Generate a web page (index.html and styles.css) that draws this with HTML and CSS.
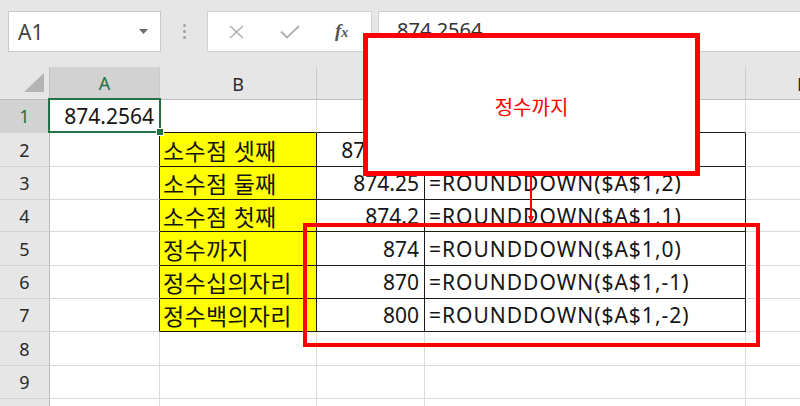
FILE: index.html
```html
<!DOCTYPE html>
<html lang="ko">
<head>
<meta charset="utf-8">
<title>ROUNDDOWN</title>
<link rel="stylesheet" href="styles.css">
</head>
<body>
<div class="app">
  <div class="toolbar">
    <div class="namebox">
      <span class="nb-text">A1</span>
      <svg class="nb-caret" width="9" height="6" viewBox="0 0 9 6"><path d="M0 0 H9 L4.5 5 Z" fill="#6b6b6b"/></svg>
    </div>
    <div class="dots"><i></i><i></i><i></i></div>
    <div class="fxbox">
      <svg class="ic-x" width="18" height="14" viewBox="0 0 18 14"><path d="M2 1 L15 13 M15 1 L2 13" stroke="#b0b0b0" stroke-width="1.6" fill="none"/></svg>
      <svg class="ic-check" width="20" height="14" viewBox="0 0 20 14"><path d="M1 6.5 L7 12.5 L19 1" stroke="#b0b0b0" stroke-width="1.8" fill="none"/></svg>
      <span class="ic-fx">f<span class="fx-x">x</span></span>
    </div>
    <div class="formula">874.2564</div>
  </div>

  <div class="sheet">
    <div class="hd corner"></div>
    <div class="hd col sel-col">A</div>
    <div class="hd col">B</div>
    <div class="hd col">C</div>
    <div class="hd col">D</div>
    <div class="hd col">E</div>

    <div class="hd row sel-row">1</div>
    <div class="c num a1">874.2564<span class="selbox"><span class="handle"></span></span></div>
    <div class="c bb"></div>
    <div class="c bb"></div>
    <div class="c bb"></div>
    <div class="c"></div>

    <div class="hd row">2</div>
    <div class="c br"></div>
    <div class="c t y">소수점 셋째</div>
    <div class="c t num">874.256</div>
    <div class="c t f">=ROUNDDOWN($A$1,3)</div>
    <div class="c"></div>

    <div class="hd row">3</div>
    <div class="c br"></div>
    <div class="c t y">소수점 둘째</div>
    <div class="c t num">874.25</div>
    <div class="c t f">=ROUNDDOWN($A$1,2)</div>
    <div class="c"></div>

    <div class="hd row">4</div>
    <div class="c br"></div>
    <div class="c t y">소수점 첫째</div>
    <div class="c t num">874.2</div>
    <div class="c t f">=ROUNDDOWN($A$1,1)</div>
    <div class="c"></div>

    <div class="hd row">5</div>
    <div class="c br"></div>
    <div class="c t y">정수까지</div>
    <div class="c t num">874</div>
    <div class="c t f">=ROUNDDOWN($A$1,0)</div>
    <div class="c"></div>

    <div class="hd row">6</div>
    <div class="c br"></div>
    <div class="c t y">정수십의자리</div>
    <div class="c t num">870</div>
    <div class="c t f">=ROUNDDOWN($A$1,-1)</div>
    <div class="c"></div>

    <div class="hd row">7</div>
    <div class="c br"></div>
    <div class="c t y">정수백의자리</div>
    <div class="c t num">800</div>
    <div class="c t f">=ROUNDDOWN($A$1,-2)</div>
    <div class="c"></div>

    <div class="hd row">8</div>
    <div class="c"></div><div class="c"></div><div class="c"></div><div class="c"></div><div class="c"></div>

    <div class="hd row">9</div>
    <div class="c"></div><div class="c"></div><div class="c"></div><div class="c"></div><div class="c"></div>

    <div class="hd row"></div>
    <div class="c"></div><div class="c"></div><div class="c"></div><div class="c"></div><div class="c"></div>
  </div>

  <div class="callout">정수까지</div>
  <svg class="arrow" width="12" height="50" viewBox="0 0 12 50"><path d="M6 0 V42" stroke="#ff0000" stroke-width="2"/><path d="M3 40 L9 40 L6 47 Z" fill="#ff0000"/></svg>
  <div class="highlight"></div>
</div>
</body>
</html>
```
FILE: styles.css
```css
html, body {
  margin: 0;
  padding: 0;
  width: 800px;
  height: 406px;
  overflow: hidden;
  background: #ffffff;
}

.app {
  position: relative;
  width: 800px;
  height: 406px;
  overflow: hidden;
  font-family: "Noto Sans", "Noto Sans CJK KR", sans-serif;
  color: #222;
}

/* toolbar / formula bar */
.toolbar {
  height: 67px;
  box-sizing: border-box;
  padding-top: 11px;
  background: #e6e6e6;
  display: flex;
  align-items: flex-start;
}

.namebox {
  margin-left: 8px;
  width: 153px;
  height: 41px;
  box-sizing: border-box;
  background: #fff;
  border: 1px solid #c9c9c9;
  display: flex;
  align-items: center;
  justify-content: space-between;
  padding: 0 12px 0 9px;
}

.nb-text {
  font-size: 21px;
  color: #444;
  line-height: 1;
  margin-top: 1px;
}

.nb-caret {
  display: block;
  margin-top: 1px;
}

.dots {
  width: 46px;
  height: 41px;
  display: flex;
  flex-direction: column;
  align-items: center;
  justify-content: center;
  gap: 3px;
  padding-left: 1px;
  box-sizing: border-box;
}

.dots i {
  display: block;
  width: 3px;
  height: 3px;
  border-radius: 50%;
  background: #a0a0a0;
}

.fxbox {
  width: 165px;
  height: 41px;
  box-sizing: border-box;
  background: #fff;
  border: 1px solid #d2d2d2;
  display: flex;
  align-items: center;
}

.ic-x {
  display: block;
  margin-left: 20px;
}

.ic-check {
  display: block;
  margin-left: 34px;
  margin-top: 1px;
}

.ic-fx {
  margin-left: 35px;
  font-family: "Liberation Serif", serif;
  font-style: italic;
  font-weight: bold;
  font-size: 19px;
  color: #555;
  line-height: 1;
  margin-top: -3px;
}

.fx-x {
  font-size: 14px;
}

.formula {
  flex: 1;
  margin-left: 6px;
  margin-right: -10px;
  height: 41px;
  box-sizing: border-box;
  background: #fff;
  border: 1px solid #cdcdcd;
  padding: 0 0 4px 18px;
  display: flex;
  align-items: center;
  font-size: 20px;
  color: #333;
}

/* sheet grid */
.sheet {
  display: grid;
  grid-template-columns: 50px 110px 157px 108px 321px 113px;
  grid-template-rows: 33px 33px 34px 33px 32px 34px 33px 33px 34px 33px 33px;
  width: 859px;
}

.hd {
  box-sizing: border-box;
  background: #e6e6e6;
  display: flex;
  align-items: center;
  justify-content: center;
  color: #2a2a2a;
  font-size: 18px;
}

.hd.corner {
  position: relative;
  border-right: 1px solid #c4c4c4;
  border-bottom: 1px solid #bdbdbd;
}

.hd.corner::after {
  content: "";
  position: absolute;
  right: 5px;
  bottom: 7px;
  width: 20px;
  height: 19px;
  background: #b4b4b4;
  clip-path: polygon(100% 0, 100% 100%, 0 100%);
}

.hd.col {
  border-right: 1px solid #cbcbcb;
  border-bottom: 1px solid #bdbdbd;
  padding-top: 1px;
}

.hd.row {
  border-right: 1px solid #bdbdbd;
  border-bottom: 1px solid #d2d2d2;
}

.hd.sel-col {
  background: #d2d2d2;
  color: #217346;
  border-bottom: 2px solid #217346;
}

.hd.sel-row {
  background: #d2d2d2;
  color: #217346;
}

.c {
  box-sizing: border-box;
  border-right: 1px solid #dadada;
  border-bottom: 1px solid #dadada;
  display: flex;
  align-items: center;
  padding: 0 4px;
  font-size: 21px;
  white-space: nowrap;
  color: #151515;
}

.c.t {
  border-right: 1px solid #1a1a1a;
  border-bottom: 1px solid #1a1a1a;
}

.c.br {
  border-right: 1px solid #1a1a1a;
}

.c.bb {
  border-bottom: 1px solid #1a1a1a;
}

.c.y {
  background: #ffff00;
  padding-left: 3px;
  font-size: 23px;
  letter-spacing: 0.3px;
}

.c.num {
  justify-content: flex-end;
  padding-right: 5px;
}

.c.f {
  padding-left: 4px;
  letter-spacing: 1px;
}

.c.a1 {
  position: relative;
}

.selbox {
  position: absolute;
  left: -2px;
  top: -2px;
  right: -2px;
  bottom: -1px;
  border: 2px solid #217346;
}

.handle {
  position: absolute;
  right: -5px;
  bottom: -5px;
  width: 6px;
  height: 6px;
  background: #217346;
  border: 1px solid #fff;
}

/* overlays */
.callout {
  position: absolute;
  left: 363px;
  top: 33px;
  width: 337px;
  height: 143px;
  box-sizing: border-box;
  border: 5px solid #ff0000;
  background: #fff;
  display: flex;
  align-items: center;
  justify-content: center;
  color: #ff0000;
  font-size: 20px;
  padding-top: 3px;
}

.arrow {
  position: absolute;
  left: 525px;
  top: 176px;
}

.highlight {
  position: absolute;
  left: 303px;
  top: 223px;
  width: 457px;
  height: 124px;
  box-sizing: border-box;
  border: 4px solid #ff0000;
}
```
